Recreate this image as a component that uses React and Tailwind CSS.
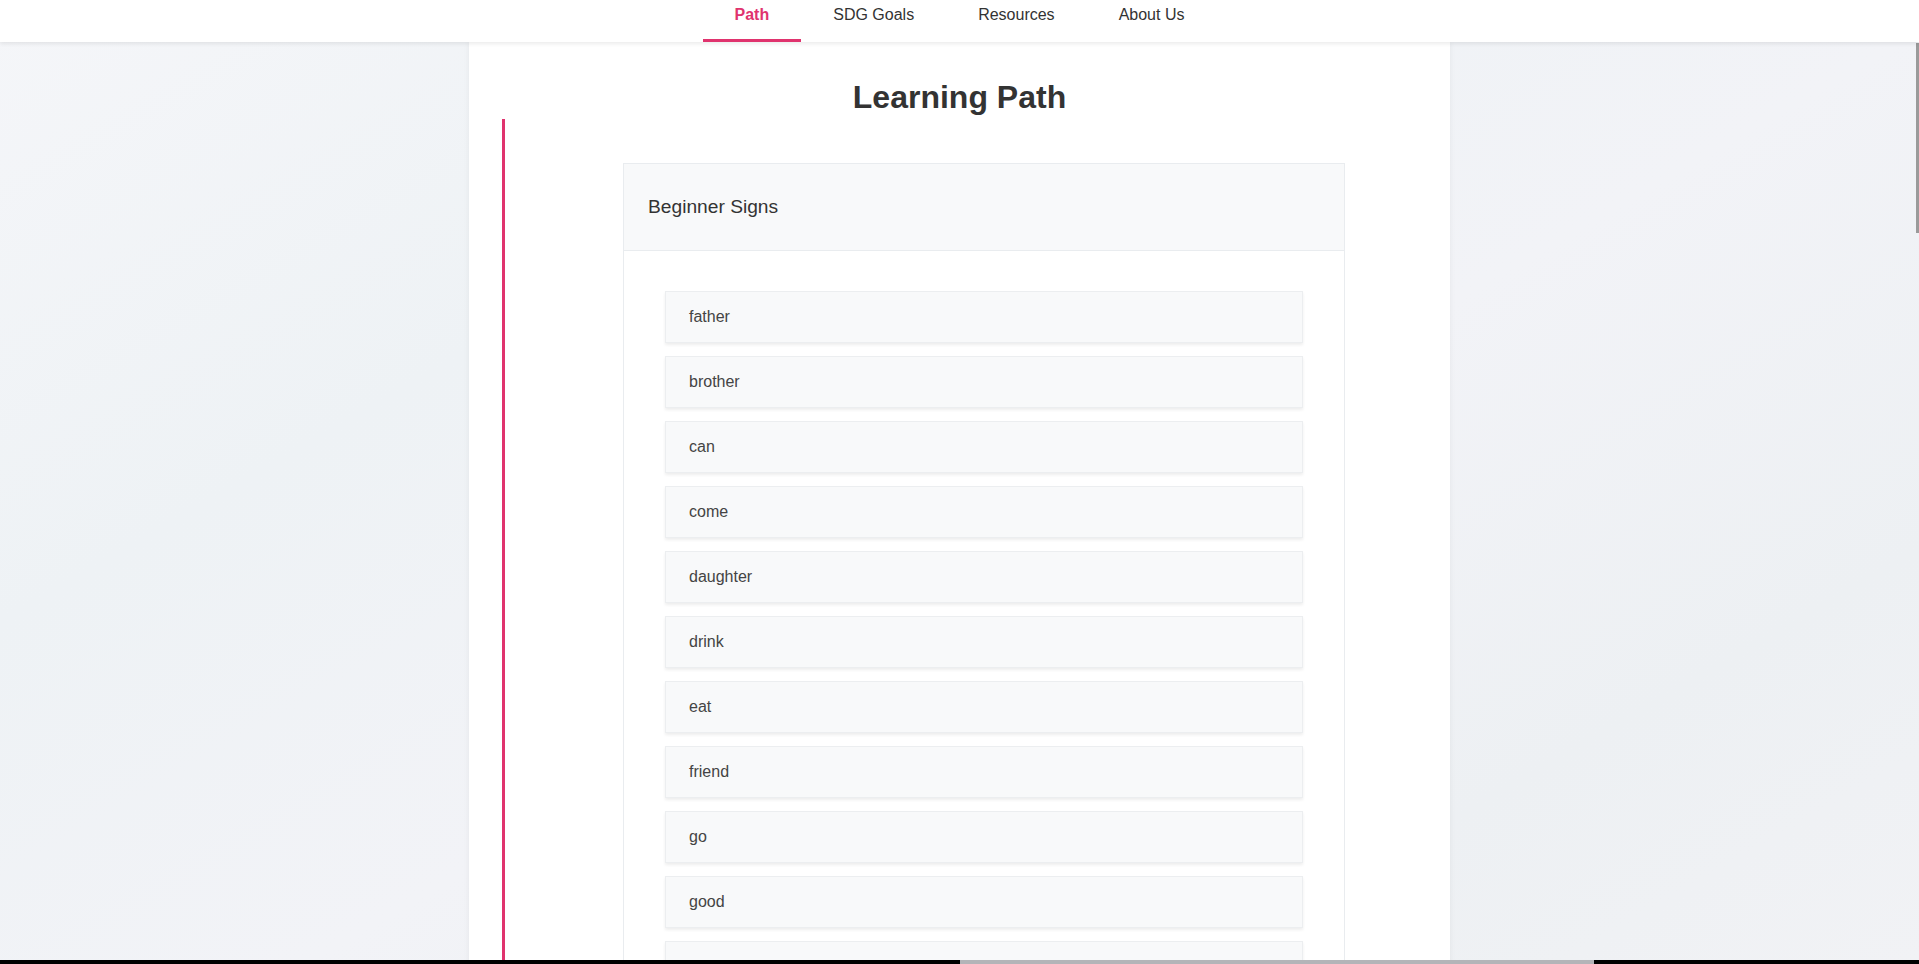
import React from 'react';

const links = ['Path', 'SDG Goals', 'Resources', 'About Us'];

const words = ['father', 'brother', 'can', 'come', 'daughter', 'drink', 'eat', 'friend', 'go', 'good', 'help'];

const NavBar = () => {
  return (
    <nav className="relative z-10 flex h-[42px] justify-center bg-white shadow-[0_2px_4px_rgba(0,0,0,0.08)]">
      {links.map((link, i) => (
        <a
          key={link}
          href="#"
          className={
            i === 0
              ? 'box-border h-[42px] border-b-[3px] border-[#e0336e] px-8 pt-[6px] text-[16px] leading-[18px] font-bold text-[#e0336e]'
              : 'box-border h-[42px] border-b-[3px] border-transparent px-8 pt-[6px] text-[16px] leading-[18px] text-[#333]'
          }
        >
          {link}
        </a>
      ))}
    </nav>
  );
};

const WordItem = ({ word }) => {
  return (
    <div className="mb-[13px] flex h-[52px] items-center border border-[#eceef0] bg-[#f8f9fa] px-[23px] text-[16px] text-[#444] shadow-[0_2px_3px_rgba(0,0,0,0.07)]">
      {word}
    </div>
  );
};

export default function App() {
  return (
    <div
      className="relative h-[964px] overflow-hidden bg-[linear-gradient(150deg,#f5f6f9_0%,#eef2f5_30%,#f2f3f7_55%,#edf0f3_80%,#f1f2f5_100%)] text-[#333]"
      style={{ fontFamily: '"Liberation Sans", Arial, sans-serif' }}
    >
      <NavBar />
      <main className="mx-auto min-h-[922px] w-[981px] bg-white pt-[37px] shadow-[0_0_6px_rgba(0,0,0,0.06)]">
        <h1 className="text-center text-[32px] leading-[37px] font-bold text-[#333]">Learning Path</h1>
        <div className="mt-[3px] ml-[33px] border-l-[3px] border-[#e0336e] pt-[44px] pl-[118px]">
          <section className="w-[722px] border border-[#e9ecef] bg-white">
            <header className="flex h-[87px] items-center border-b border-[#e9ecef] bg-[#f8f9fa] px-[24px]">
              <h2 className="text-[19.2px] text-[#333]">Beginner Signs</h2>
            </header>
            <div className="px-[41px] pt-[40px] pb-[27px]">
              {words.map((w) => (
                <WordItem key={w} word={w} />
              ))}
            </div>
          </section>
        </div>
      </main>

      {/* browser scrollbars seen in the capture */}
      <div className="absolute top-[43px] right-0 h-[190px] w-[3px] bg-[#9a9a9a]" />
      <div className="absolute bottom-0 left-0 flex h-[4px] w-full bg-black">
        <div className="ml-[960px] h-full w-[634px] bg-[#b4b4b8]" />
      </div>
    </div>
  );
}
